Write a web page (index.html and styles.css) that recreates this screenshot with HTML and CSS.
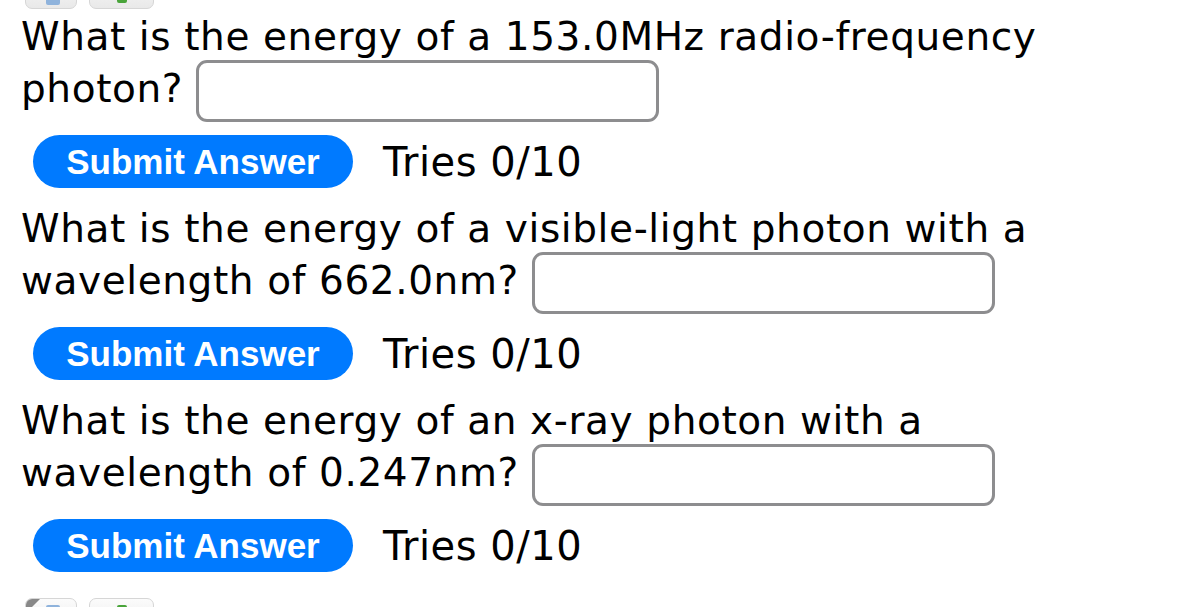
FILE: index.html
```html
<!DOCTYPE html>
<html>
<head>
<meta charset="utf-8">
<link rel="stylesheet" href="styles.css">
</head>
<body>
<div class="tools tools-top">
  <span class="tool tool-doc"><span class="fold"></span><span class="blue"></span></span>
  <span class="tool tool-eq"><span class="green"></span></span>
</div>

<div class="question">
  <p class="qtext">What is the energy of a 153.0MHz radio-frequency photon? <input class="answer" type="text"></p>
  <div class="actions"><button class="submit">Submit Answer</button><span class="tries">Tries 0/10</span></div>
</div>

<div class="question">
  <p class="qtext">What is the energy of a visible-light photon with a wavelength of 662.0nm? <input class="answer" type="text"></p>
  <div class="actions"><button class="submit">Submit Answer</button><span class="tries">Tries 0/10</span></div>
</div>

<div class="question">
  <p class="qtext">What is the energy of an x-ray photon with a wavelength of 0.247nm? <input class="answer" type="text"></p>
  <div class="actions"><button class="submit">Submit Answer</button><span class="tries">Tries 0/10</span></div>
</div>

<div class="tools tools-bottom">
  <span class="tool tool-doc"><span class="fold"></span><span class="blue"></span></span>
  <span class="tool tool-eq"><span class="green"></span></span>
</div>
</body>
</html>
```
FILE: styles.css
```css
html, body {
  margin: 0;
  padding: 0;
  background: #fff;
}
body {
  width: 1080px;
  padding-left: 21px;
  font-family: "DejaVu Sans", Verdana, sans-serif;
  color: #000;
  overflow: hidden;
  height: 607px;
}
.tools {
  display: flex;
  gap: 12px;
  padding-left: 4px;
}
.tools-top {
  margin-top: -28px;
  height: 35px;
  margin-bottom: -11px;
}
.tools-bottom {
  margin-top: 26px;
}
.tool {
  position: relative;
  display: block;
  height: 35px;
  border: 1px solid #d6d6d6;
  border-radius: 7px;
  background: linear-gradient(#fbfbfb, #e9e9e9);
  overflow: hidden;
}
.tool-doc { width: 50px; }
.tool-eq { width: 63px; }
.fold {
  position: absolute;
  left: 0; top: 0;
  width: 0; height: 0;
  border-top: 14px solid #888;
  border-right: 14px solid transparent;
}
.blue {
  position: absolute;
  left: 20px; top: 6px;
  width: 14px; height: 26px;
  background: #8fb3dc;
  border-radius: 2px;
}
.green {
  position: absolute;
  left: 27px; top: 6px;
  width: 10px; height: 24px;
  background: #49a43a;
  border-radius: 2px;
}
.question {
  display: block;
}
.qtext {
  margin: 18px 0 0 0;
  font-size: 39px;
  line-height: 46px;
  letter-spacing: 0.6px;
  width: 1060px;
}
.answer {
  box-sizing: border-box;
  width: 463px;
  height: 62px;
  margin: 0;
  padding: 0 10px;
  border: 3px solid #8d8d8f;
  border-radius: 11px;
  font-size: 30px;
  vertical-align: middle;
  background: #fff;
  outline: none;
}
.actions {
  display: flex;
  align-items: center;
  gap: 30px;
  margin: 13px 0 0 12px;
}
.submit {
  width: 320px;
  height: 53px;
  border: none;
  border-radius: 27px;
  background: #007aff;
  color: #fff;
  font-family: "Liberation Sans", Arial, sans-serif;
  font-weight: bold;
  font-size: 35px;
  padding: 0;
}
.tries {
  font-size: 40px;
  letter-spacing: 0.5px;
  font-family: "DejaVu Sans", Verdana, sans-serif;
}
```
